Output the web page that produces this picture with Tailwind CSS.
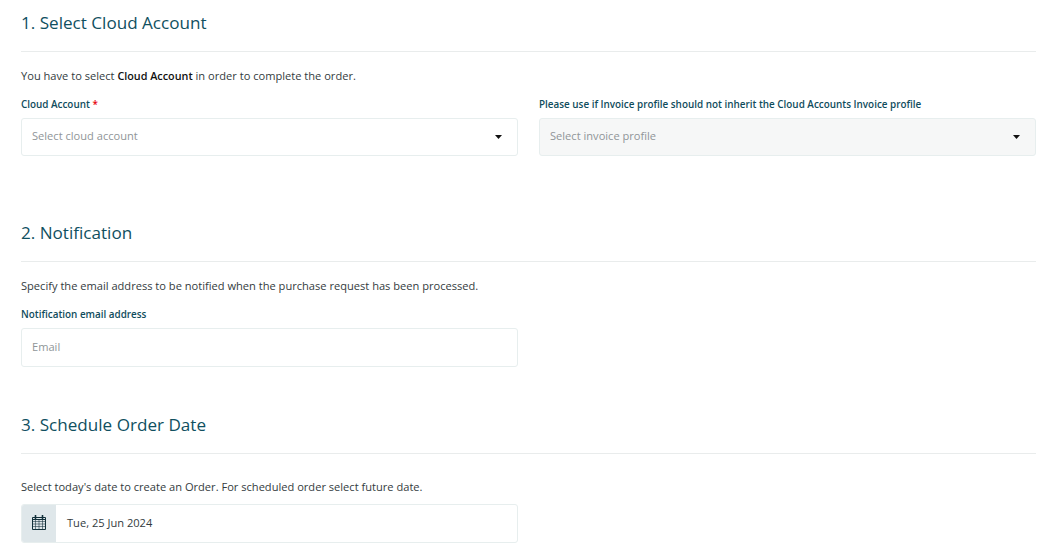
<!doctype html>
<html><head><meta charset="utf-8"><script src="https://cdn.jsdelivr.net/npm/@tailwindcss/browser@4"></script></head>
<body class="bg-white overflow-hidden">
<div class="w-[1049px] h-[556px] overflow-hidden pl-[21px] pr-[13px] font-['Open_Sans',sans-serif] text-[11.1px] text-[#333b40]">
  <h2 class="h-[52px] w-[1015px] border-b border-[#e9ecec] pt-[10px] text-[17.1px] leading-[26px] text-[#10505f]">1. Select Cloud Account</h2>
  <p class="mt-[15px] leading-[18px]">You have to select <span class="font-semibold text-[10.8px] text-[#111]">Cloud Account</span> in order to complete the order.</p>
  <div class="mt-[10px] grid grid-cols-[497px_497px] gap-[21px]">
    <div>
      <label class="block text-[9.9px] leading-[18px] font-semibold text-[#0f4c5c]">Cloud Account <span class="text-red-600">*</span></label>
      <div class="mt-[5px] h-[38px] pb-px border border-[#e7eeee] rounded-[3px] flex items-center justify-between pl-[10px] pr-[15px] text-[#909598]">Select cloud account
        <svg width="7" height="4" viewBox="0 0 7 4"><path d="M0 0h7L3.500 4z" fill="#111"/></svg></div>
    </div>
    <div>
      <label class="block text-[9.9px] leading-[18px] font-semibold text-[#0f4c5c]">Please use if Invoice profile should not inherit the Cloud Accounts Invoice profile</label>
      <div class="mt-[5px] h-[38px] pb-px border border-[#e7eeee] bg-[#f6f7f7] rounded-[3px] flex items-center justify-between pl-[10px] pr-[15px] text-[#909598]">Select invoice profile
        <svg width="7" height="4" viewBox="0 0 7 4"><path d="M0 0h7L3.500 4z" fill="#111"/></svg></div>
    </div>
  </div>
  <h2 class="mt-[63px] h-[43px] w-[1015px] border-b border-[#e9ecec] pt-[1px] text-[17.1px] leading-[26px] text-[#10505f]">2. Notification</h2>
  <p class="mt-[15px] leading-[18px]">Specify the email address to be notified when the purchase request has been processed.</p>
  <label class="block mt-[10px] text-[9.9px] leading-[18px] font-semibold text-[#0f4c5c]">Notification email address</label>
  <div class="mt-[5px] w-[497px] h-[39px] border border-[#e7eeee] rounded-[3px] flex items-center pl-[10px] text-[#909598]">Email</div>
  <h2 class="mt-[44px] h-[43px] w-[1015px] border-b border-[#e9ecec] pt-[1px] text-[17.1px] leading-[26px] text-[#10505f]">3. Schedule Order Date</h2>
  <p class="mt-[24px] leading-[18px]">Select today's date to create an Order. For scheduled order select future date.</p>
  <div class="mt-[8px] w-[497px] h-[39px] border border-[#e7eeee] rounded-[3px] flex items-center overflow-hidden">
    <div class="w-[34px] h-full bg-[#dfe7ea] flex items-center justify-center">
      <svg width="14" height="15" viewBox="0 0 14 15" class="-mt-[2px]"><path d="M.5 6.500h13 M.5 9h13 M.5 11.500h13 M3.500 5v9 M7 5v9 M10.500 5v9" fill="none" stroke="#12303a" stroke-opacity=".55"/><path d="M.5 2.500h13v12H.5z M.5 4.500h13" fill="none" stroke="#12303a"/><path d="M3.500 .5v3 M10.500 .5v3" stroke="#12303a" stroke-width="1.600" stroke-linecap="round"/></svg>
    </div>
    <span class="ml-[11px]">Tue, 25 Jun 2024</span>
  </div>
</div>
</body></html>
